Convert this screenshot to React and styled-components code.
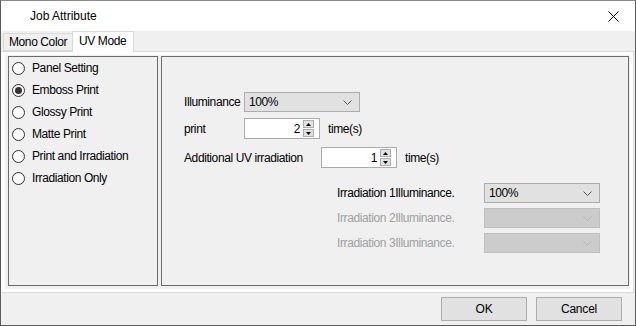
import React from "react";
import styled, { createGlobalStyle } from "styled-components";

const Global = createGlobalStyle`
  html, body {
    margin: 0;
    padding: 0;
    background: #f0f0f0;
  }
  body {
    font-family: "Liberation Sans", Arial, sans-serif;
    font-size: 12px;
    color: #000;
  }
`;

const Window = styled.div`
  width: 636px;
  height: 326px;
  box-sizing: border-box;
  border: 1px solid #5c5c5c;
  border-top-color: #8a8a8a;
  background: #f0f0f0;
  display: flex;
  flex-direction: column;
  letter-spacing: -0.4px;
`;

const TitleBar = styled.div`
  height: 30px;
  background: #fff;
  display: flex;
  align-items: center;
  justify-content: space-between;
  padding-left: 29px;
`;

const Title = styled.span`
  font-size: 12px;
  letter-spacing: 0;
`;

const CloseBox = styled.div`
  width: 46px;
  height: 30px;
  display: flex;
  align-items: center;
  justify-content: center;
  margin-right: -1px;
`;

const TabStrip = styled.div`
  height: 20px;
  display: flex;
  align-items: flex-end;
  padding-left: 2px;
  position: relative;
  z-index: 1;
`;

const Tab = styled.div`
  box-sizing: border-box;
  height: ${(p) => (p.$active ? "21px" : "18px")};
  margin-bottom: ${(p) => (p.$active ? "-1px" : "0")};
  padding: ${(p) => (p.$active ? "2px 0 0 6px" : "1px 0 0 5px")};
  border: 1px solid #d9d9d9;
  border-bottom: ${(p) => (p.$active ? "none" : "1px solid #d9d9d9")};
  background: ${(p) => (p.$active ? "#fff" : "#f0f0f0")};
  margin-left: ${(p) => (p.$first ? "0" : "-1px")};
  width: ${(p) => p.$w}px;
  white-space: nowrap;
`;

const TabPanel = styled.div`
  width: 633px;
  box-sizing: border-box;
  height: 242px;
  border: 1px solid #dadada;
  border-left-color: #fff;
  background: #fff;
  padding: 3px;
`;

const Page = styled.div`
  height: 100%;
  box-sizing: border-box;
  background: #f0f0f0;
  padding: 1px 1px 3px 3px;
  display: flex;
  gap: 3px;
`;

const Group = styled.div`
  box-sizing: border-box;
  height: 230px;
  width: ${(p) => p.$w}px;
  border: 1px solid #6b6b6b;
  display: flex;
  flex-direction: column;
  padding: ${(p) => p.$pad};
`;

const RadioRow = styled.label`
  height: 22px;
  display: flex;
  align-items: center;
  gap: 7px;
`;

const RadioCircle = styled.span`
  box-sizing: border-box;
  width: 13px;
  height: 13px;
  border-radius: 50%;
  border: 1px solid #333;
  background: #fff;
  display: flex;
  align-items: center;
  justify-content: center;
  &::after {
    content: "";
    width: 7px;
    height: 7px;
    border-radius: 50%;
    background: ${(p) => (p.$checked ? "#333" : "transparent")};
  }
`;

const FieldRow = styled.div`
  display: flex;
  align-items: center;
  height: ${(p) => p.$h}px;
  margin-bottom: ${(p) => p.$mb}px;
  margin-left: ${(p) => p.$ml || 0}px;
`;

const FieldLabel = styled.span`
  width: ${(p) => p.$w}px;
  flex: none;
  color: ${(p) => (p.$disabled ? "#a0a0a0" : "#000")};
  white-space: nowrap;
`;

const Select = styled.div`
  box-sizing: border-box;
  width: 116px;
  height: 20px;
  border: 1px solid ${(p) => (p.$disabled ? "#bfbfbf" : "#adadad")};
  background: ${(p) => (p.$disabled ? "#cccccc" : "#e1e1e1")};
  display: flex;
  align-items: center;
  justify-content: space-between;
  padding: 0 7px 0 4px;
`;

const SpinBox = styled.div`
  box-sizing: border-box;
  width: 76px;
  height: 21px;
  border: 1px solid #ababab;
  background: #fff;
  display: flex;
  align-items: center;
  justify-content: flex-end;
  padding-right: 5px;
  gap: 3px;
`;

const SpinButtons = styled.div`
  display: flex;
  flex-direction: column;
  gap: 1px;
`;

const SpinButton = styled.div`
  box-sizing: border-box;
  width: 11px;
  height: 8px;
  background: #e1e1e1;
  border: 1px solid #adadad;
  display: flex;
  align-items: center;
  justify-content: center;
`;

const Unit = styled.span`
  margin-left: 8px;
`;

const Footer = styled.div`
  flex: 1;
  display: flex;
  justify-content: flex-end;
  align-items: flex-start;
  padding: 4px 13px 0 0;
  gap: 9px;
`;

const Button = styled.button`
  box-sizing: border-box;
  width: 86px;
  height: 24px;
  background: #e1e1e1;
  border: 1px solid #adadad;
  font-family: inherit;
  font-size: 12px;
  letter-spacing: -0.2px;
  color: #000;
  padding: 0;
`;

const Chevron = ({ disabled }) => (
  <svg width="9" height="5" viewBox="0 0 9 5">
    <path d="M0.5 0.5 L4.5 4.5 L8.5 0.5" fill="none" stroke={disabled ? "#b5b5b5" : "#555"} strokeWidth="1" />
  </svg>
);

const Arrow = ({ up }) => (
  <svg width="5" height="3" viewBox="0 0 5 3">
    <path d={up ? "M0 3 L2.5 0 L5 3 Z" : "M0 0 L2.5 3 L5 0 Z"} fill="#000" />
  </svg>
);

const Spin = ({ value }) => (
  <SpinBox>
    <span>{value}</span>
    <SpinButtons>
      <SpinButton>
        <Arrow up />
      </SpinButton>
      <SpinButton>
        <Arrow />
      </SpinButton>
    </SpinButtons>
  </SpinBox>
);

const modes = [
  "Panel Setting",
  "Emboss Print",
  "Glossy Print",
  "Matte Print",
  "Print and Irradiation",
  "Irradiation Only",
];

export default function App() {
  return (
    <>
      <Global />
      <Window>
        <TitleBar>
          <Title>Job Attribute</Title>
          <CloseBox>
            <svg width="11" height="11" viewBox="0 0 11 11">
              <path d="M0.5 0.5 L10.5 10.5 M10.5 0.5 L0.5 10.5" stroke="#000" strokeWidth="1" />
            </svg>
          </CloseBox>
        </TitleBar>
        <TabStrip>
          <Tab $first $w={70}>Mono Color</Tab>
          <Tab $active $w={62}>UV Mode</Tab>
        </TabStrip>
        <TabPanel>
          <Page>
            <Group $w={150} $pad="0 0 0 3px">
              {modes.map((m, i) => (
                <RadioRow key={m}>
                  <RadioCircle $checked={i === 1} />
                  {m}
                </RadioRow>
              ))}
            </Group>
            <Group $w={468} $pad="35px 0 0 22px">
              <FieldRow $h={20} $mb={6}>
                <FieldLabel $w={60}>Illuminance</FieldLabel>
                <Select>
                  <span>100%</span>
                  <Chevron />
                </Select>
              </FieldRow>
              <FieldRow $h={21} $mb={8}>
                <FieldLabel $w={60}>print</FieldLabel>
                <Spin value="2" />
                <Unit>time(s)</Unit>
              </FieldRow>
              <FieldRow $h={21} $mb={15}>
                <FieldLabel $w={137}>Additional UV irradiation</FieldLabel>
                <Spin value="1" />
                <Unit>time(s)</Unit>
              </FieldRow>
              {[1, 2, 3].map((n) => (
                <FieldRow key={n} $h={20} $mb={5} $ml={153}>
                  <FieldLabel $w={147} $disabled={n > 1}>
                    Irradiation {n}Illuminance.
                  </FieldLabel>
                  <Select $disabled={n > 1}>
                    <span>{n === 1 ? "100%" : ""}</span>
                    <Chevron disabled={n > 1} />
                  </Select>
                </FieldRow>
              ))}
            </Group>
          </Page>
        </TabPanel>
        <Footer>
          <Button>OK</Button>
          <Button>Cancel</Button>
        </Footer>
      </Window>
    </>
  );
}
